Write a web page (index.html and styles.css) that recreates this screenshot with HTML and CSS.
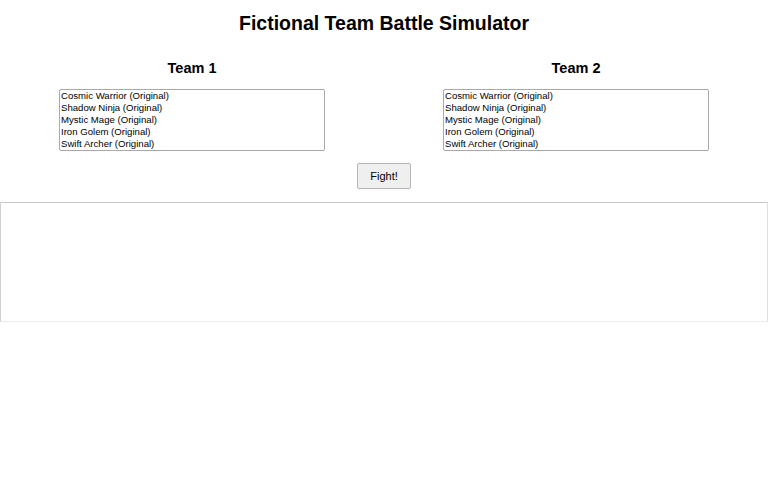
FILE: index.html
```html
<!DOCTYPE html>
<html>
<head>
<meta charset="utf-8">
<title>Fictional Team Battle Simulator</title>
<link rel="stylesheet" href="styles.css">
</head>
<body>
<h1 class="title">Fictional Team Battle Simulator</h1>
<div class="teams">
  <div class="team">
    <h3 class="team-name">Team 1</h3>
    <select class="roster" multiple size="5">
      <option>Cosmic Warrior (Original)</option>
      <option>Shadow Ninja (Original)</option>
      <option>Mystic Mage (Original)</option>
      <option>Iron Golem (Original)</option>
      <option>Swift Archer (Original)</option>
    </select>
  </div>
  <div class="team">
    <h3 class="team-name">Team 2</h3>
    <select class="roster" multiple size="5">
      <option>Cosmic Warrior (Original)</option>
      <option>Shadow Ninja (Original)</option>
      <option>Mystic Mage (Original)</option>
      <option>Iron Golem (Original)</option>
      <option>Swift Archer (Original)</option>
    </select>
  </div>
</div>
<div class="actions">
  <button class="fight">Fight!</button>
</div>
<div class="result"></div>
</body>
</html>
```
FILE: styles.css
```css
html, body {
  margin: 0;
  padding: 0;
  background: #ffffff;
}
body {
  font-family: "Liberation Sans", Arial, sans-serif;
  color: #000;
}
.title {
  margin: 12px 0 0;
  font-size: 19.5px;
  line-height: 23px;
  font-weight: bold;
  text-align: center;
}
.teams {
  display: flex;
  margin-top: 25px;
}
.team {
  flex: 1;
  display: flex;
  flex-direction: column;
  align-items: center;
}
.team-name {
  margin: 0;
  font-size: 14.5px;
  line-height: 16px;
  font-weight: bold;
}
.roster {
  margin-top: 13px;
  width: 266px;
  height: 62px;
  box-sizing: border-box;
  padding: 0;
  border: 1px solid #a9a9a9;
  font-family: "Liberation Sans", Arial, sans-serif;
  font-size: 9.6px;
  overflow: hidden;
}
.roster option {
  height: 12px;
  line-height: 10px;
  padding: 0 1px 2px;
  box-sizing: border-box;
  min-height: 0;
}
.actions {
  display: flex;
  justify-content: center;
  margin-top: 12px;
}
.fight {
  width: 54px;
  height: 26px;
  font-family: "Liberation Sans", Arial, sans-serif;
  font-size: 11px;
  background: #efefef;
  border: 1px solid #b5b5b5;
  border-radius: 2px;
  padding: 0;
  color: #000;
}
.result {
  margin-top: 13px;
  height: 120px;
  box-sizing: border-box;
  border-style: solid;
  border-width: 1px;
  border-color: #c8c8c8 #e0e0e0 #ebebeb #d0d0d0;
}
```
